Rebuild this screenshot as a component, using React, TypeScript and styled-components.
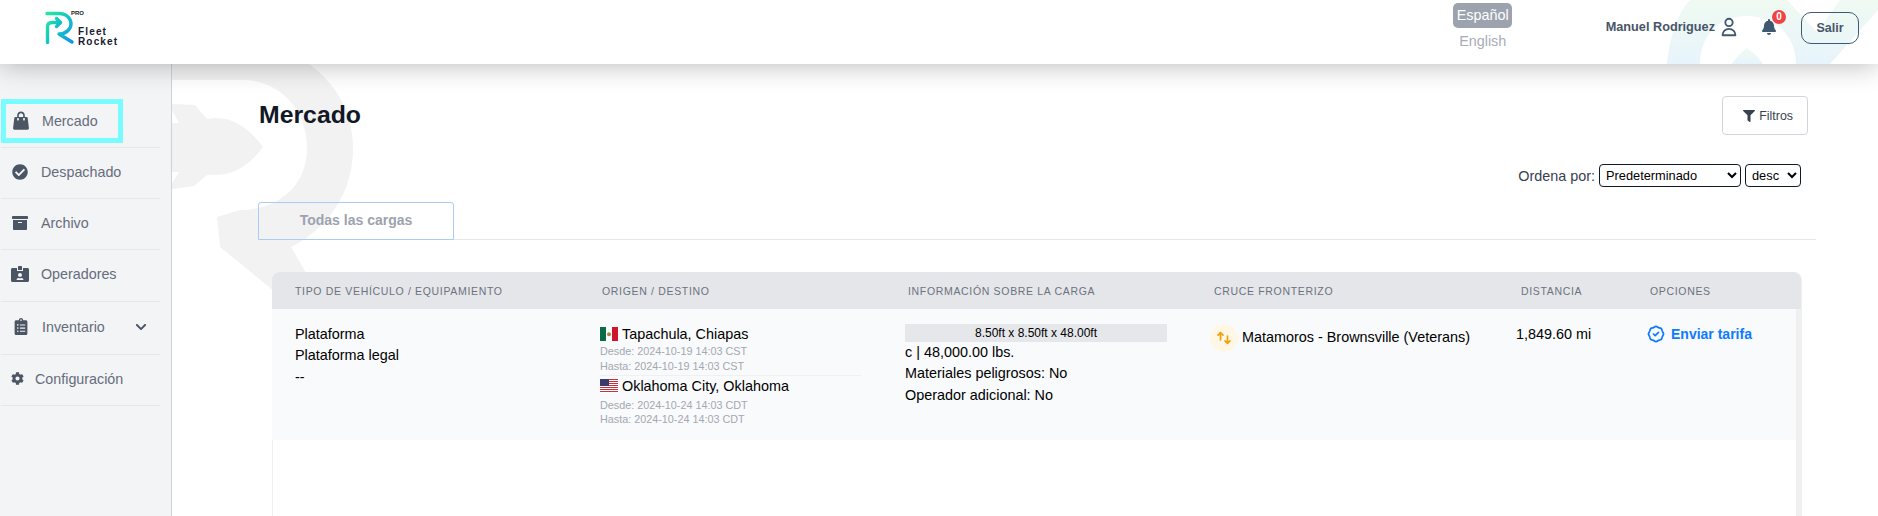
import React from "react";
import styled, { createGlobalStyle } from "styled-components";
import { FaCheckCircle, FaArchive, FaIdCardAlt, FaClipboardList, FaCog, FaChevronDown, FaBell, FaFilter } from "react-icons/fa";
import { HiOutlineUser, HiOutlineBadgeCheck } from "react-icons/hi";

const Global = createGlobalStyle`
  html, body { margin: 0; height: 516px; overflow: hidden; background: #fff; }
  body { font-family: "Liberation Sans", Arial, sans-serif; font-size: 14.4px; color: #000; }
  * { box-sizing: border-box; }
`;

const Page = styled.div`display: flex; flex-direction: column; height: 516px; overflow: hidden;`;

const Header = styled.header`
  position: relative; z-index: 2; flex: none; height: 64px; background: #fff; display: flex; align-items: stretch;
  padding-left: 45px; box-shadow: 0 0 28px rgba(0,0,0,.3); overflow: visible;
`;
const HeaderMark = styled.svg`position: absolute; right: 0; top: 0; width: 238px; height: 64px;`;
const Logo = styled.div`position: relative; display: flex; align-items: flex-end; width: 74px; height: 36px; margin-top: 10px;`;
const LogoMark = styled.svg`width: 30px; height: 36px; flex: none;`;
const LogoPro = styled.span`position: absolute; left: 26px; top: 0; font-size: 6px; font-weight: 700; line-height: 7px; color: #222;`;
const LogoText = styled.div`margin-left: 3px; font-size: 10px; line-height: 9.5px; font-weight: 700; letter-spacing: 1.15px; color: #16202e;`;
const HeaderRight = styled.div`position: relative; margin-left: auto; display: flex; align-items: flex-start;`;
const Lang = styled.div`width: 60px; margin-top: 3px; display: flex; flex-direction: column; align-items: center;`;
const LangActive = styled.span`width: 59px; height: 25px; background: #9ca3af; color: #fff; border-radius: 5px; font-size: 14.4px; line-height: 25px; text-align: center;`;
const LangOther = styled.span`margin-top: 3px; font-size: 14.4px; line-height: 20px; color: #a8adb7;`;
const UserName = styled.span`margin-left: 93px; margin-top: 19px; font-size: 12.7px; line-height: 16px; font-weight: 700; color: #475569; white-space: nowrap;`;
const UserIcon = styled(HiOutlineUser)`width: 22px; height: 22px; margin: 16px 0 0 3px; color: #3f5970;`;
const BellWrap = styled.div`position: relative; width: 16px; height: 18px; margin: 19px 0 0 21px; color: #3f5970;`;
const BellBadge = styled.span`position: absolute; left: 11px; top: -9px; width: 14px; height: 14px; border-radius: 50%; background: #ef4444; color: #fff; font-size: 10px; font-weight: 700; line-height: 14px; text-align: center;`;
const Exit = styled.button`
  width: 58px; height: 32px; margin: 12px 19px 0 24px; border: 1px solid #3f5970; border-radius: 10px; background: transparent;
  font: 700 12.5px "Liberation Sans", sans-serif; color: #475569; padding: 0;
`;

const Body = styled.div`flex: 1; display: flex; min-height: 0;`;
const Sidebar = styled.nav`width: 172px; flex: none; background: #f3f4f6; border-right: 1px solid #cfd2d8; padding: 33px 0 0 1px;`;
const Item = styled.div<{ $h: number }>`height: ${p => p.$h}px; width: 159px; border-bottom: 1px solid #e5e7eb; padding-bottom: 3px; display: flex; align-items: center;`;
const NavLink = styled.a<{ $active?: boolean; $pad: number; $gap: number }>`
  display: flex; align-items: center; height: 34px; width: 149px; margin-left: 5px; padding-left: ${p => p.$pad}px; gap: ${p => p.$gap}px;
  font-size: 14.3px; color: #656c7a;
  ${p => p.$active ? "width: 112px; outline: 5px solid #78fcff;" : ""}
  svg { color: #4b5563; flex: none; }
`;
const Chevron = styled(FaChevronDown)`margin-left: 16px; width: 12px; height: 12px;`;

const Main = styled.main`position: relative; flex: 1; min-width: 0; padding: 32px 62px 0 86px; background: #fff; overflow: hidden;`;
const Watermark = styled.svg`position: absolute; left: 0; top: 0; width: 240px; height: 240px;`;
const TitleRow = styled.div`position: relative; display: flex; justify-content: space-between; align-items: flex-start; height: 38px; padding-right: 8px;`;
const Title = styled.h1`margin: 0 0 0 1px; font-size: 24.8px; line-height: 38px; font-weight: 700; color: #111827;`;
const FilterBtn = styled.button`
  width: 86px; height: 39px; display: flex; align-items: center; justify-content: flex-end; gap: 4px; padding: 0 14px 0 0;
  background: #fff; border: 1px solid #d1d5db; border-radius: 4px; font: 12.4px "Liberation Sans", sans-serif; color: #374151;
  svg { color: #374151; width: 12px; height: 12px; }
`;
const SortRow = styled.div`position: relative; display: flex; justify-content: flex-end; align-items: center; gap: 4px; height: 23px; margin-top: 30px; padding-right: 15px; font-size: 14.4px; color: #374151;`;
const Select = styled.select<{ $w: number }>`
  width: ${p => p.$w}px; height: 23px; padding-left: 2px; font: 12.8px "Liberation Sans", sans-serif; color: #000; background: #fff; border: 1px solid #111827; border-radius: 4px;
`;
const TabBar = styled.div`position: relative; height: 38px; margin-top: 15px; border-bottom: 1px solid #e5e7eb;`;
const Tab = styled.div`width: 196px; height: 38px; border: 1px solid #a9cbf5; border-radius: 3px 3px 0 0; font-size: 14px; font-weight: 700; color: #9ca3af; line-height: 35px; text-align: center;`;
const Table = styled.div`position: relative; margin: 32px 14px 0 14px; height: 260px; border-left: 1px solid #f0f0f0; border-right: 6px solid #f0f0f0; border-radius: 8px 8px 0 0; background: #fff;`;
const HeadRow = styled.div`
  margin: 0 -5px 0 -1px; height: 37px; display: grid; grid-template-columns: 307px 306px 306px 307px 129px 1fr; align-items: center;
  padding-left: 23px; background: #e5e6e9; border-radius: 8px 8px 0 0;
`;
const HeadCell = styled.div`font-size: 10.5px; letter-spacing: .67px; color: #6b7280; white-space: nowrap;`;
const DataRow = styled.div`margin-left: -1px; height: 131px; display: grid; grid-template-columns: 305px 305px 305px 306px 131px 1fr; padding: 15px 0 0 23px; background: #f9fafb;`;
const Line = styled.div<{ $h?: number }>`line-height: ${p => p.$h ?? 21}px; white-space: nowrap;`;
const Place = styled.div`display: flex; align-items: center; gap: 4px; height: 20px; line-height: 20px;`;
const Flag = styled.svg`width: 18px; height: 14px; flex: none;`;
const Dates = styled.div<{ $h: number; $top: number }>`margin-top: ${p => p.$top}px; font-size: 10.8px; line-height: ${p => p.$h}px; color: #a3a8b1; white-space: nowrap;`;
const PlaceGap = styled.div`width: 261px; height: 2px; border-bottom: 1px solid #eef0f2;`;
const Dim = styled.div`width: 262px; height: 18px; background: #e5e7eb; font-size: 12px; line-height: 18px; text-align: center;`;
const Crossing = styled.div`display: flex; align-items: center; gap: 4px;`;
const CrossIcon = styled.span`width: 28px; height: 28px; border-radius: 50%; background: #fef7e6; display: flex; align-items: center; justify-content: center; flex: none;`;
const CrossText = styled.span`margin-top: -2px; white-space: nowrap;`;
const SendLink = styled.a`display: flex; align-items: center; gap: 5px; height: 20px; font-weight: 700; font-size: 14px; color: #0d7bff; white-space: nowrap;`;
const SendIcon = styled(HiOutlineBadgeCheck)`width: 20px; height: 20px; margin-left: -1px;`;

const cols = ["TIPO DE VEHÍCULO / EQUIPAMIENTO", "ORIGEN / DESTINO", "INFORMACIÓN SOBRE LA CARGA", "CRUCE FRONTERIZO", "DISTANCIA", "OPCIONES"];

const BagIcon = () => (
  <svg width="16" height="19" viewBox="0 0 16 19">
    <path fill="currentColor" fillRule="evenodd" d="M4.2 6 V4.6 C4.2 2.2 5.8 .6 8 .6 C10.2 .6 11.8 2.2 11.8 4.6 V6 H13.6 C14.2 6 14.6 6.4 14.7 7 L15.9 17 C16 18 15.4 18.7 14.4 18.7 H1.6 C.6 18.7 0 18 .1 17 L1.3 7 C1.4 6.4 1.8 6 2.4 6 Z M5.8 6 H10.2 V4.6 C10.2 3.2 9.3 2.2 8 2.2 C6.7 2.2 5.8 3.2 5.8 4.6 Z M4.2 8.2 A.9 .9 0 1 0 5.8 8.2 A.9 .9 0 1 0 4.2 8.2 Z M10.2 8.2 A.9 .9 0 1 0 11.8 8.2 A.9 .9 0 1 0 10.2 8.2 Z" />
  </svg>
);

export default function App() {
  return (
    <Page>
      <Global />
      <Header>
        <HeaderMark viewBox="0 0 238 64">
          <defs>
            <linearGradient id="hm" x1="0" y1="0" x2="0" y2="1">
              <stop offset="0" stopColor="#f0faf2" />
              <stop offset="1" stopColor="#e7f4fb" />
            </linearGradient>
          </defs>
          <path fill="url(#hm)" d="M27 64 C30 35 38 12 50 0 L147 0 L177 32 L200 0 L238 0 L238 10 L190 64 L156 64 C156 35 135 16 107 16 C80 16 60 35 60 64 Z" />
          <path fill="url(#hm)" d="M92 64 C97 56 102 52 107 48 C112 52 118 56 123 64 Z" />
        </HeaderMark>
        <Logo>
          <LogoMark viewBox="0 0 30 36">
            <defs>
              <linearGradient id="lg" x1="0" y1="0" x2="1" y2="1">
                <stop offset="0" stopColor="#25e6a0" />
                <stop offset=".5" stopColor="#14c4c4" />
                <stop offset="1" stopColor="#0f95ee" />
              </linearGradient>
            </defs>
            <path fill="none" stroke="url(#lg)" strokeWidth="3.4" strokeLinecap="round" strokeLinejoin="round" d="M2 3.5 H14 C22 3.5 26 9 26 14 C26 19 21 24 14 24 L27 32" />
            <path fill="none" stroke="url(#lg)" strokeWidth="3.4" strokeLinecap="round" strokeLinejoin="round" d="M2.5 32.5 V17 C2.5 13.5 4.5 12.5 7 12.5 H15 M11.5 8.5 L15.5 12.5 L11.5 16.5" />
          </LogoMark>
          <LogoPro>PRO</LogoPro>
          <LogoText>Fleet<br />Rocket</LogoText>
        </Logo>
        <HeaderRight>
          <Lang>
            <LangActive>Español</LangActive>
            <LangOther>English</LangOther>
          </Lang>
          <UserName>Manuel Rodriguez</UserName>
          <UserIcon />
          <BellWrap>
            <FaBell size={16} />
            <BellBadge>0</BellBadge>
          </BellWrap>
          <Exit>Salir</Exit>
        </HeaderRight>
      </Header>
      <Body>
        <Sidebar>
          <Item $h={51}><NavLink $active $pad={7} $gap={13}><BagIcon />Mercado</NavLink></Item>
          <Item $h={51}><NavLink $pad={6} $gap={13}><FaCheckCircle size={16} />Despachado</NavLink></Item>
          <Item $h={51}><NavLink $pad={6} $gap={13}><FaArchive size={16} />Archivo</NavLink></Item>
          <Item $h={52}><NavLink $pad={5} $gap={12}><FaIdCardAlt size={18} />Operadores</NavLink></Item>
          <Item $h={53}><NavLink $pad={8} $gap={14}><FaClipboardList size={14} style={{ height: 17 }} />Inventario<Chevron /></NavLink></Item>
          <Item $h={51}><NavLink $pad={5} $gap={11}><FaCog size={13} />Configuración</NavLink></Item>
        </Sidebar>
        <Main>
          <Watermark viewBox="0 0 240 240">
            <path fill="#f2f2f2" d="M0 16 H71 C107 16 135 45 135 84 C135 123 105 146 68 146 L45 153 L48 183 L118 240 H152 L119 183 C155 165 181 130 181 84 C181 46 162 18 137 0 H0 Z" />
            <path fill="#f2f2f2" d="M0 40 L23 41 L35 55 L44 54 C65 54 80 68 91 83 C80 98 65 111 44 111 L35 111 L22 122 L0 125 Z" />
            <path fill="#fff" d="M0 46 L7 59 L0 59 Z M0 108 L7 108 L0 119 Z" />
          </Watermark>
          <TitleRow>
            <Title>Mercado</Title>
            <FilterBtn><FaFilter />Filtros</FilterBtn>
          </TitleRow>
          <SortRow>
            Ordena por:
            <Select $w={142} defaultValue="p"><option value="p">Predeterminado</option></Select>
            <Select $w={56} defaultValue="d"><option value="d">desc</option></Select>
          </SortRow>
          <TabBar><Tab>Todas las cargas</Tab></TabBar>
          <Table>
            <HeadRow>{cols.map(c => <HeadCell key={c}>{c}</HeadCell>)}</HeadRow>
            <DataRow>
              <div>
                <Line $h={20}>Plataforma</Line>
                <Line $h={22}>Plataforma legal</Line>
                <Line $h={22}>--</Line>
              </div>
              <div>
                <Place>
                  <Flag viewBox="0 0 18 14">
                    <rect width="6" height="14" fill="#0b6b47" />
                    <rect x="6" width="6" height="14" fill="#fdfdfd" />
                    <rect x="12" width="6" height="14" fill="#d0142c" />
                    <ellipse cx="9" cy="7.2" rx="2" ry="2" fill="#a8843e" />
                  </Flag>
                  Tapachula, Chiapas
                </Place>
                <Dates $h={15} $top={0}>Desde: 2024-10-19 14:03 CST<br />Hasta: 2024-10-19 14:03 CST</Dates>
                <PlaceGap />
                <Place>
                  <Flag viewBox="0 0 18 14">
                    <rect width="18" height="14" fill="#fff" />
                    {[0, 2, 4, 6, 8, 10, 12].map(y => <rect key={y} y={y} width="18" height="1" fill="#c8313e" />)}
                    <rect width="9" height="7" fill="#3c3b6e" />
                  </Flag>
                  Oklahoma City, Oklahoma
                </Place>
                <Dates $h={14} $top={2}>Desde: 2024-10-24 14:03 CDT<br />Hasta: 2024-10-24 14:03 CDT</Dates>
              </div>
              <div>
                <Dim>8.50ft x 8.50ft x 48.00ft</Dim>
                <Line>c | 48,000.00 lbs.</Line>
                <Line>Materiales peligrosos: No</Line>
                <Line $h={22}>Operador adicional: No</Line>
              </div>
              <div>
                <Crossing>
                  <CrossIcon>
                    <svg width="16" height="16" viewBox="0 0 16 16" fill="none" stroke="#f59e0b" strokeWidth="1.7" strokeLinecap="round" strokeLinejoin="round">
                      <path d="M4.5 10 V3 M2 5.2 L4.5 2.7 L7 5.2" />
                      <path d="M11.5 6 V13 M9 10.8 L11.5 13.3 L14 10.8" />
                    </svg>
                  </CrossIcon>
                  <CrossText>Matamoros - Brownsville (Veterans)</CrossText>
                </Crossing>
              </div>
              <Line $h={20}>1,849.60 mi</Line>
              <SendLink><SendIcon />Enviar tarifa</SendLink>
            </DataRow>
          </Table>
        </Main>
      </Body>
    </Page>
  );
}
